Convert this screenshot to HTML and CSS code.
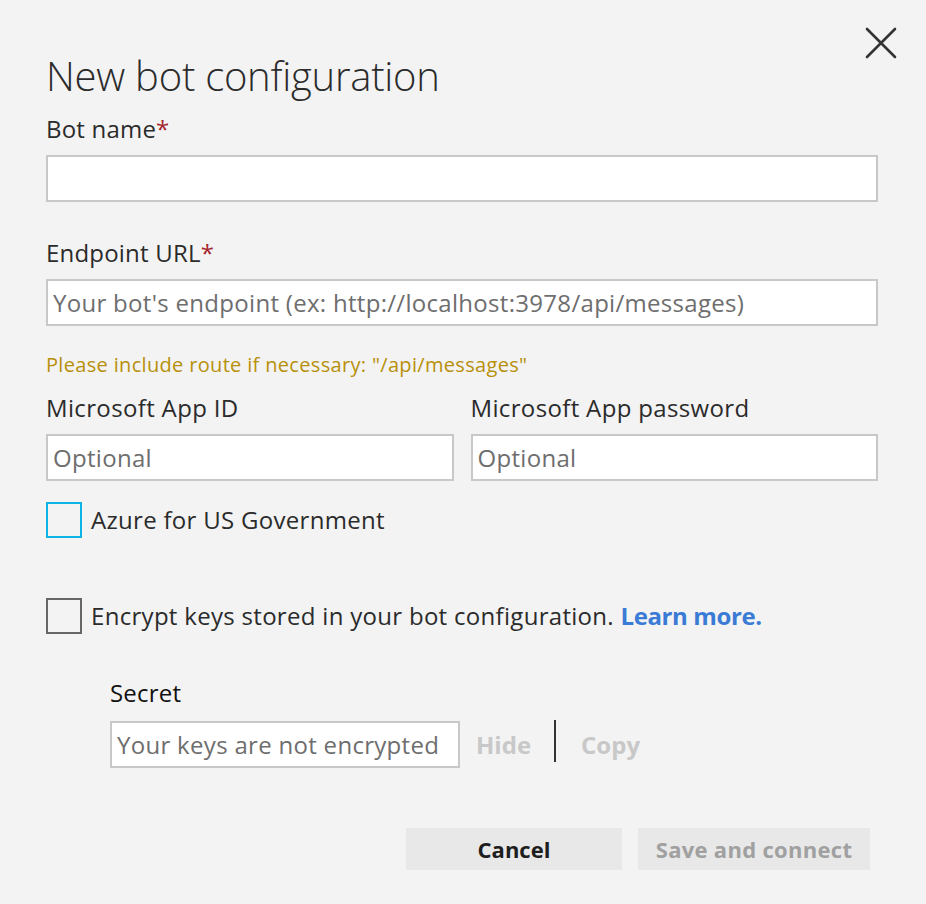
FILE: index.html
```html
<!DOCTYPE html>
<html>
<head>
<meta charset="utf-8">
<link rel="stylesheet" href="styles.css">
</head>
<body>
<div class="dialog">
  <button class="close" aria-label="Close">
    <svg width="32" height="32" viewBox="0 0 32 32"><path d="M2 2 L30 30 M30 2 L2 30" stroke="#333" stroke-width="2.6" stroke-linecap="round" fill="none"/></svg>
  </button>
  <h1 class="title">New bot configuration</h1>

  <div class="field">
    <label class="label">Bot name<span class="req">*</span></label>
    <input class="input" type="text">
  </div>

  <div class="field field-gap">
    <label class="label">Endpoint URL<span class="req">*</span></label>
    <input class="input" type="text" placeholder="Your bot's endpoint (ex: http://localhost:3978/api/messages)">
  </div>

  <div class="hint">Please include route if necessary: "/api/messages"</div>

  <div class="row">
    <div class="field col">
      <label class="label">Microsoft App ID</label>
      <input class="input" type="text" placeholder="Optional">
    </div>
    <div class="field col">
      <label class="label">Microsoft App password</label>
      <input class="input" type="text" placeholder="Optional">
    </div>
  </div>

  <div class="check check-first">
    <span class="box box-focus"></span>
    <span class="check-text">Azure for US Government</span>
  </div>

  <div class="check check-second">
    <span class="box"></span>
    <span class="check-text">Encrypt keys stored in your bot configuration. <a class="link" href="#">Learn more.</a></span>
  </div>

  <div class="secret">
    <label class="label secret-label">Secret</label>
    <div class="secret-row">
      <input class="input secret-input" type="text" placeholder="Your keys are not encrypted">
      <span class="action action-hide">Hide</span>
      <span class="sep"></span>
      <span class="action">Copy</span>
    </div>
  </div>

  <div class="buttons">
    <button class="btn btn-cancel">Cancel</button>
    <button class="btn btn-save">Save and connect</button>
  </div>
</div>
</body>
</html>
```

FILE: styles.css
```css
html, body {
  margin: 0;
  padding: 0;
  background: #f3f3f3;
}
body {
  font-family: "Open Sans", "Noto Sans", "Liberation Sans", sans-serif;
  color: #2b2b2b;
}
.dialog {
  position: relative;
  width: 926px;
  height: 904px;
  box-sizing: border-box;
  padding: 50px 48px 0 46px;
}
.close {
  position: absolute;
  top: 26px;
  right: 28px;
  width: 34px;
  height: 34px;
  padding: 1px;
  border: 0;
  background: transparent;
  display: flex;
  align-items: center;
  justify-content: center;
}
.title {
  margin: 0;
  font-weight: 300;
  font-size: 40px;
  line-height: 52px;
  color: #2b2b2b;
  letter-spacing: -0.25px;
}
.field {
  display: flex;
  flex-direction: column;
}
.title + .field {
  margin-top: 12px;
}
.field-gap {
  margin-top: 36px;
}
.label {
  font-size: 24px;
  line-height: 30px;
  letter-spacing: 0.2px;
  color: #2b2b2b;
  margin-bottom: 11px;
}
.req {
  color: #a4262c;
}
.input {
  box-sizing: border-box;
  height: 47px;
  width: 100%;
  border: 2px solid #c8c8c8;
  background: #fff;
  margin: 0;
  padding: 0 5px;
  font-family: inherit;
  font-size: 24px;
  letter-spacing: 0.3px;
  color: #2b2b2b;
  outline: none;
}
.input::placeholder {
  color: #6e6e6e;
}
.hint {
  margin-top: 27px;
  font-size: 20px;
  line-height: 24px;
  letter-spacing: 0.33px;
  color: #b8900b;
}
.row {
  display: flex;
  gap: 17px;
  margin-top: 16px;
}
.row .label {
  letter-spacing: 0.35px;
}
.col {
  flex: 1;
}
.check {
  display: flex;
  align-items: center;
  gap: 9px;
}
.check-first {
  margin-top: 21px;
}
.check-second {
  margin-top: 60px;
}
.box {
  box-sizing: border-box;
  width: 36px;
  height: 36px;
  border: 2px solid #666;
  flex: none;
}
.box-focus {
  border-color: #0fb4e6;
}
.check-text {
  font-size: 24px;
  line-height: 30px;
  letter-spacing: 0.3px;
  color: #2b2b2b;
}
.link {
  color: #3a7bd5;
  font-weight: 700;
  text-decoration: none;
  letter-spacing: -0.4px;
}
.secret {
  margin-top: 44px;
  padding-left: 64px;
}
.secret-label {
  display: block;
  color: #111;
  margin-bottom: 12px;
}
.secret-row {
  display: flex;
  align-items: center;
}
.secret-input {
  width: 350px;
}
.action {
  font-size: 24px;
  font-weight: 700;
  color: #c8c8c8;
}
.action-hide {
  margin-left: 16px;
}
.sep {
  width: 2px;
  height: 42px;
  background: #333;
  margin: 0 25px 6px 23px;
  align-self: flex-start;
}
.buttons {
  display: flex;
  justify-content: flex-end;
  gap: 16px;
  margin-top: 60px;
  padding-right: 8px;
}
.btn {
  height: 42px;
  border: 0;
  background: #e8e8e8;
  font-family: inherit;
  font-size: 22px;
  font-weight: 700;
  padding: 0;
}
.btn-cancel {
  width: 216px;
  color: #1e1e1e;
}
.btn-save {
  width: 232px;
  color: #a0a0a0;
  letter-spacing: 0.3px;
}
```
